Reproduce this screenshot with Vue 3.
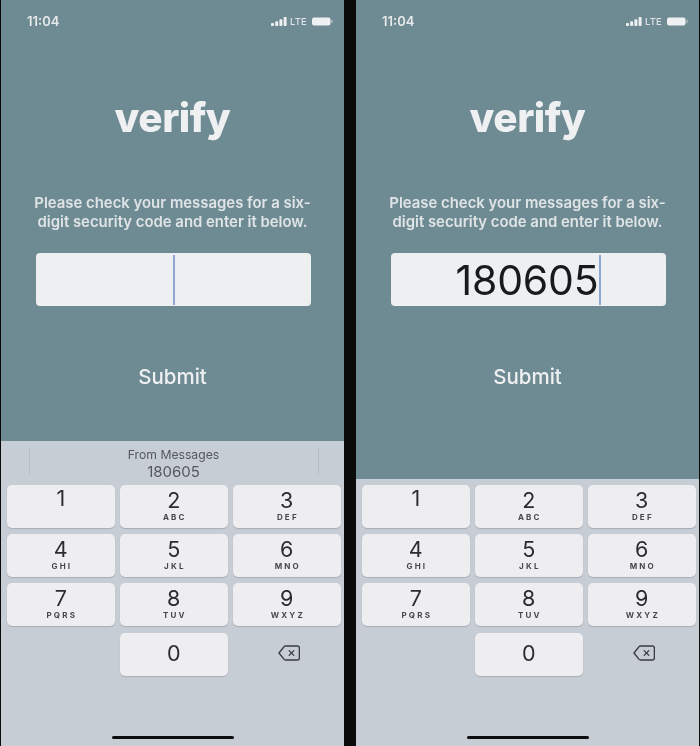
<script setup>
const keys = [
  { d: '1', l: '' }, { d: '2', l: 'ABC' }, { d: '3', l: 'DEF' },
  { d: '4', l: 'GHI' }, { d: '5', l: 'JKL' }, { d: '6', l: 'MNO' },
  { d: '7', l: 'PQRS' }, { d: '8', l: 'TUV' }, { d: '9', l: 'WXYZ' },
]
const phones = [
  { code: '', suggest: true },
  { code: '180605', suggest: false },
]
</script>

<template>
  <div class="screen">
    <section v-for="(p, i) in phones" :key="i" class="phone">
      <div class="main">
        <header class="status">
          <span class="time">11:04</span>
          <span class="indicators">
            <svg class="signal" width="16" height="9" viewBox="0 0 16 9">
              <rect x="0" y="6" width="3" height="3" rx="0.8" />
              <rect x="4.2" y="4.2" width="3" height="4.8" rx="0.8" />
              <rect x="8.4" y="2.2" width="3" height="6.8" rx="0.8" />
              <rect x="12.6" y="0" width="3" height="9" rx="0.8" />
            </svg>
            <span class="lte">LTE</span>
            <svg class="battery" width="21" height="9" viewBox="0 0 21 9">
              <rect x="0" y="0.5" width="18.5" height="8" rx="2" />
              <rect x="19.4" y="3" width="1.2" height="3" rx="0.6" opacity="0.6" />
            </svg>
          </span>
        </header>
        <h1 class="title">verify</h1>
        <p class="message">Please check your messages for a six-<br />digit security code and enter it below.</p>
        <div class="field" :class="{ filled: p.code }">
          <span class="code">{{ p.code }}</span><span class="caret"></span>
        </div>
        <div class="submit">Submit</div>
      </div>
      <div class="keyboard">
        <div v-if="p.suggest" class="suggestion">
          <div class="suggest-text">
            <span class="from">From Messages</span>
            <span class="otp">180605</span>
          </div>
        </div>
        <div class="keys" :class="{ bare: !p.suggest }">
          <div v-for="k in keys" :key="k.d" class="key">
            <span class="digit" :class="{ solo: !k.l }">{{ k.d }}</span>
            <span v-if="k.l" class="letters">{{ k.l }}</span>
          </div>
          <div class="blank"></div>
          <div class="key zero"><span class="digit">0</span></div>
          <div class="delete">
            <svg width="22" height="16" viewBox="0 0 22 16" fill="none">
              <path d="M7.4 1H19.4a2 2 0 0 1 2 2v10a2 2 0 0 1-2 2H7.4a1.8 1.8 0 0 1-1.3-.6L1 8l5.1-6.4A1.8 1.8 0 0 1 7.4 1Z" stroke="#3a3d41" stroke-width="1.4" stroke-linejoin="round" />
              <path d="M11.2 5.6l4.6 4.8M15.8 5.6l-4.6 4.8" stroke="#3a3d41" stroke-width="1.3" stroke-linecap="round" />
            </svg>
          </div>
        </div>
        <div class="spacer"></div>
        <div class="home"></div>
      </div>
    </section>
  </div>
</template>

<style>
html, body { margin: 0; background: #0a0a0a; }
</style>

<style scoped>
.screen {
  width: 700px;
  height: 746px;
  display: flex;
  gap: 12px;
  padding-left: 1px;
  box-sizing: border-box;
  overflow: hidden;
  background: #0a0a0a;
  font-family: Inter, "Noto Sans", sans-serif;
  filter: blur(0.35px);
}
.phone {
  width: 343px;
  height: 746px;
  display: flex;
  flex-direction: column;
  flex: none;
}
.main {
  flex: 1;
  min-height: 0;
  background: #6e8a92;
  display: flex;
  flex-direction: column;
  align-items: center;
  color: #eef0f1;
}
.status {
  align-self: stretch;
  height: 14px;
  padding: 14px 11px 0 26px;
  display: flex;
  justify-content: space-between;
  align-items: center;
}
.time { font-size: 13px; font-weight: 600; color: #e6e9ea; }
.indicators { display: flex; align-items: center; gap: 2px; }
.signal, .battery { fill: #eef0f1; }
.lte { font-size: 9.5px; font-weight: 500; letter-spacing: 0.2px; margin-right: 3px; margin-left: 1px; color: #dfe3e5; }
.title {
  margin: 67px 0 0;
  font-size: 40.5px;
  line-height: 46px;
  font-weight: 800;
  letter-spacing: -0.5px;
  color: #eff0f2;
}
.message {
  margin: 53px 0 0;
  font-size: 14.9px;
  line-height: 18.5px;
  font-weight: 600;
  white-space: nowrap;
  text-align: center;
  color: #dfe4e6;
}
.field {
  margin-top: 22px;
  margin-left: 2px;
  width: 275px;
  height: 53px;
  border-radius: 4px;
  background: #eeeff1;
  display: flex;
  align-items: center;
  justify-content: center;
}
.code {
  font-size: 41px;
  letter-spacing: -0.2px;
  color: #17191b;
}
.caret {
  width: 2px;
  height: 50px;
  margin-left: 1px;
  background: #8fa6d4;
}
.submit {
  margin-top: 58px;
  font-size: 20.5px;
  line-height: 26px;
  font-weight: 500;
  color: #eef0f1;
}
.keyboard {
  background: #c7cdd4;
  display: flex;
  flex-direction: column;
  padding: 0 4px 7px 6px;
}
.suggestion {
  height: 44px;
  display: flex;
  justify-content: center;
  align-items: flex-start;
}
.suggest-text {
  margin: 7px 0 0 0;
  width: 288px;
  height: 26px;
  border-left: 1px solid #b7bdc5;
  border-right: 1px solid #b7bdc5;
  display: flex;
  flex-direction: column;
  align-items: center;
  color: #54585e;
}
.from { font-size: 12.2px; line-height: 13px; margin-top: 0; }
.otp { font-size: 15px; line-height: 17px; margin-top: 2px; }
.keys {
  display: grid;
  grid-template-columns: repeat(3, 107.5px);
  grid-auto-rows: 43px;
  column-gap: 5.5px;
  row-gap: 6.3px;
}
.keys.bare { padding-top: 6px; }
.key {
  background: #eeeef0;
  border-radius: 5px;
  box-shadow: 0 1px 1px #a9aeb5;
  display: flex;
  flex-direction: column;
  align-items: center;
  color: #2a2c2f;
}
.digit {
  font-size: 21.5px;
  line-height: 26px;
  margin-top: 2px;
  font-weight: 400;
}
.digit.solo { margin-top: 0; }
.zero { justify-content: center; }
.zero .digit { margin-top: -2px; }
.letters {
  font-size: 8px;
  line-height: 9px;
  font-weight: 700;
  letter-spacing: 2.2px;
  margin-right: -2.2px;
  margin-top: 0;
  color: #44474b;
}
.delete {
  display: flex;
  align-items: center;
  justify-content: center;
  padding: 0 0 2px 4px;
}
.spacer { height: 60px; }
.home {
  align-self: center;
  width: 122px;
  height: 3.5px;
  border-radius: 2px;
  background: #0c0d0e;
  margin-right: 2px;
}
</style>
